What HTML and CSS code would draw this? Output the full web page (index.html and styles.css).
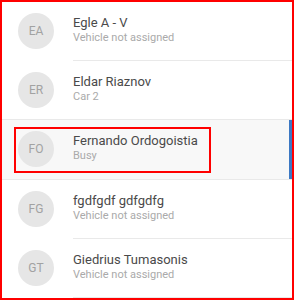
FILE: index.html
```html
<!DOCTYPE html>
<html>
<head>
<meta charset="utf-8">
<link rel="stylesheet" href="styles.css">
</head>
<body>
<div class="frame">
  <ul class="list">
    <li class="row">
      <div class="avatar">EA</div>
      <div class="body">
        <div class="name">Egle A - V</div>
        <div class="sub">Vehicle not assigned</div>
      </div>
    </li>
    <li class="row row-last-before-sel">
      <div class="avatar">ER</div>
      <div class="body">
        <div class="name">Eldar Riaznov</div>
        <div class="sub">Car 2</div>
      </div>
    </li>
    <li class="row selected">
      <div class="avatar">FO</div>
      <div class="body">
        <div class="name">Fernando Ordogoistia</div>
        <div class="sub">Busy</div>
      </div>
      <span class="mark"></span>
    </li>
    <li class="row">
      <div class="avatar">FG</div>
      <div class="body">
        <div class="name">fgdfgdf gdfgdfg</div>
        <div class="sub">Vehicle not assigned</div>
      </div>
    </li>
    <li class="row">
      <div class="avatar">GT</div>
      <div class="body">
        <div class="name">Giedrius Tumasonis</div>
        <div class="sub">Vehicle not assigned</div>
      </div>
    </li>
  </ul>
</div>
</body>
</html>
```
FILE: styles.css
```css
html, body {
  margin: 0;
  padding: 0;
  background: #ffffff;
}
.frame {
  width: 294px;
  height: 300px;
  box-sizing: border-box;
  border: 2px solid #ff0000;
  overflow: hidden;
  font-family: Roboto, "Liberation Sans", sans-serif;
}
.list {
  list-style: none;
  margin: 0;
  padding: 0;
}
.row {
  position: relative;
  height: 59px;
  display: flex;
  align-items: center;
  padding-left: 16px;
  box-sizing: border-box;
}
.row::after {
  content: "";
  position: absolute;
  left: 71px;
  right: 0;
  bottom: 0;
  height: 1px;
  background: #e9e9e9;
}
.row-last-before-sel::after {
  left: 0;
}
.selected {
  background: #f8f8f8;
  height: 60px;
  box-shadow: inset -3px 0 0 #3c78c3;
}
.selected::after {
  left: 0;
}
.avatar {
  width: 36px;
  height: 36px;
  border-radius: 50%;
  background: #e6e6e6;
  color: #a2a2a2;
  font-size: 12px;
  display: flex;
  align-items: center;
  justify-content: center;
  flex: none;
  margin-bottom: 2px;
}
.body {
  margin-left: 19px;
  display: flex;
  flex-direction: column;
  margin-top: -4px;
}
.name {
  font-size: 13px;
  line-height: 16px;
  color: #4a4a4a;
}
.sub {
  font-size: 11px;
  line-height: 14px;
  color: #aaaaaa;
}
.mark {
  position: absolute;
  left: 12px;
  top: 7px;
  width: 197px;
  height: 46px;
  box-sizing: border-box;
  border: 2px solid #ff0000;
}
```
